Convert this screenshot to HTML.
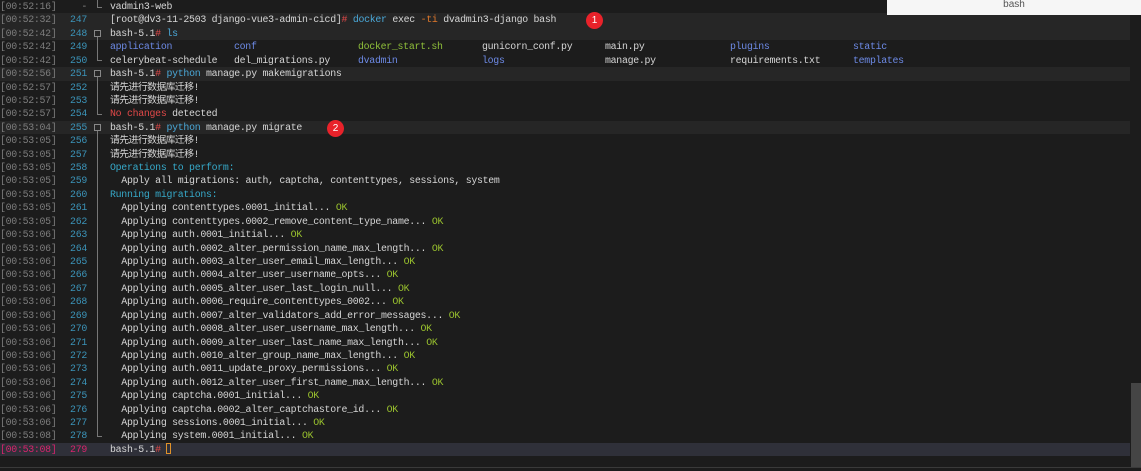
<!DOCTYPE html>
<html><head><meta charset="utf-8"><style>
*{margin:0;padding:0;box-sizing:border-box}
body{width:1141px;height:471px;background:#1c1c1c;overflow:hidden;position:relative;font-family:"Liberation Mono","Noto Sans CJK SC",monospace;font-size:9.9px;letter-spacing:-0.28px;color:#d6d6d6}
.r{position:absolute;left:0;width:1130px;height:13.42px;line-height:13.42px;white-space:pre}
.hl{background:#262626}
.cur{background:#2f3039}
.ts{position:absolute;left:0;color:#7d7d7d}
.ln{position:absolute;left:60px;width:27px;text-align:right;color:#3b93b8}
.tx{position:absolute;left:110px}
.c{color:#36a9c9}.b{color:#6d8ae6}.g{color:#8fbf3a}.ok{color:#9ac22e}.red{color:#e04848}.or{color:#e0782a}.py{color:#4aa8d8}
.pk{color:#d8246e}
.cj{letter-spacing:-0.6px}
.box{position:absolute;left:94px;width:7px;height:7px;border:1px solid #888}
.vl{position:absolute;left:97px;width:1px;background:#777}
.tk{position:absolute;left:97px;width:5px;height:1px;background:#777}
.badge{position:absolute;width:17px;height:17px;border-radius:50%;background:#e8222a;color:#fff;font-family:"Liberation Sans",sans-serif;font-size:10px;letter-spacing:0;text-align:center;line-height:17px}
</style></head><body>
<div class="r" style="top:0"><span class="ts">[00:52:16]</span><span class="ln" style="color:#888">-</span><span class="tx">vadmin3-web</span></div>
<div class="r hl" style="top:13.42px"><span class="ts">[00:52:32]</span><span class="ln">247</span><span class="tx">[root@dv3-11-2503 django-vue3-admin-cicd]<span class="red">#</span> <span class="py">docker</span> exec <span class="or">-ti</span> dvadmin3-django bash</span></div>
<div class="r hl" style="top:26.84px"><span class="ts">[00:52:42]</span><span class="ln">248</span><span class="tx">bash-5.1<span class="red">#</span> <span class="py">ls</span></span></div>
<div class="r" style="top:40.26px"><span class="ts">[00:52:42]</span><span class="ln">249</span><span class="tx b">application</span><span class="tx b" style="left:234px">conf</span><span class="tx g" style="left:358px">docker_start.sh</span><span class="tx" style="left:482px">gunicorn_conf.py</span><span class="tx" style="left:605px">main.py</span><span class="tx b" style="left:730px">plugins</span><span class="tx b" style="left:853px">static</span></div>
<div class="r" style="top:53.68px"><span class="ts">[00:52:42]</span><span class="ln">250</span><span class="tx">celerybeat-schedule</span><span class="tx" style="left:234px">del_migrations.py</span><span class="tx b" style="left:358px">dvadmin</span><span class="tx b" style="left:482px">logs</span><span class="tx" style="left:605px">manage.py</span><span class="tx" style="left:730px">requirements.txt</span><span class="tx b" style="left:853px">templates</span></div>
<div class="r hl" style="top:67.1px"><span class="ts">[00:52:56]</span><span class="ln">251</span><span class="tx">bash-5.1<span class="red">#</span> <span class="py">python</span> manage.py makemigrations</span></div>
<div class="r" style="top:80.52px"><span class="ts">[00:52:57]</span><span class="ln">252</span><span class="tx cj">请先进行数据库迁移!</span></div>
<div class="r" style="top:93.94px"><span class="ts">[00:52:57]</span><span class="ln">253</span><span class="tx cj">请先进行数据库迁移!</span></div>
<div class="r" style="top:107.36px"><span class="ts">[00:52:57]</span><span class="ln">254</span><span class="tx"><span class="red">No changes</span> detected</span></div>
<div class="r hl" style="top:120.78px"><span class="ts">[00:53:04]</span><span class="ln">255</span><span class="tx">bash-5.1<span class="red">#</span> <span class="py">python</span> manage.py migrate</span></div>
<div class="r" style="top:134.2px"><span class="ts">[00:53:05]</span><span class="ln">256</span><span class="tx cj">请先进行数据库迁移!</span></div>
<div class="r" style="top:147.62px"><span class="ts">[00:53:05]</span><span class="ln">257</span><span class="tx cj">请先进行数据库迁移!</span></div>
<div class="r" style="top:161.04px"><span class="ts">[00:53:05]</span><span class="ln">258</span><span class="tx c">Operations to perform:</span></div>
<div class="r" style="top:174.46px"><span class="ts">[00:53:05]</span><span class="ln">259</span><span class="tx">  Apply all migrations: auth, captcha, contenttypes, sessions, system</span></div>
<div class="r" style="top:187.88px"><span class="ts">[00:53:05]</span><span class="ln">260</span><span class="tx c">Running migrations:</span></div>
<div class="r" style="top:201.3px"><span class="ts">[00:53:05]</span><span class="ln">261</span><span class="tx">  Applying contenttypes.0001_initial... <span class="ok">OK</span></span></div>
<div class="r" style="top:214.72px"><span class="ts">[00:53:05]</span><span class="ln">262</span><span class="tx">  Applying contenttypes.0002_remove_content_type_name... <span class="ok">OK</span></span></div>
<div class="r" style="top:228.14px"><span class="ts">[00:53:06]</span><span class="ln">263</span><span class="tx">  Applying auth.0001_initial... <span class="ok">OK</span></span></div>
<div class="r" style="top:241.56px"><span class="ts">[00:53:06]</span><span class="ln">264</span><span class="tx">  Applying auth.0002_alter_permission_name_max_length... <span class="ok">OK</span></span></div>
<div class="r" style="top:254.98px"><span class="ts">[00:53:06]</span><span class="ln">265</span><span class="tx">  Applying auth.0003_alter_user_email_max_length... <span class="ok">OK</span></span></div>
<div class="r" style="top:268.4px"><span class="ts">[00:53:06]</span><span class="ln">266</span><span class="tx">  Applying auth.0004_alter_user_username_opts... <span class="ok">OK</span></span></div>
<div class="r" style="top:281.82px"><span class="ts">[00:53:06]</span><span class="ln">267</span><span class="tx">  Applying auth.0005_alter_user_last_login_null... <span class="ok">OK</span></span></div>
<div class="r" style="top:295.24px"><span class="ts">[00:53:06]</span><span class="ln">268</span><span class="tx">  Applying auth.0006_require_contenttypes_0002... <span class="ok">OK</span></span></div>
<div class="r" style="top:308.66px"><span class="ts">[00:53:06]</span><span class="ln">269</span><span class="tx">  Applying auth.0007_alter_validators_add_error_messages... <span class="ok">OK</span></span></div>
<div class="r" style="top:322.08px"><span class="ts">[00:53:06]</span><span class="ln">270</span><span class="tx">  Applying auth.0008_alter_user_username_max_length... <span class="ok">OK</span></span></div>
<div class="r" style="top:335.5px"><span class="ts">[00:53:06]</span><span class="ln">271</span><span class="tx">  Applying auth.0009_alter_user_last_name_max_length... <span class="ok">OK</span></span></div>
<div class="r" style="top:348.92px"><span class="ts">[00:53:06]</span><span class="ln">272</span><span class="tx">  Applying auth.0010_alter_group_name_max_length... <span class="ok">OK</span></span></div>
<div class="r" style="top:362.34px"><span class="ts">[00:53:06]</span><span class="ln">273</span><span class="tx">  Applying auth.0011_update_proxy_permissions... <span class="ok">OK</span></span></div>
<div class="r" style="top:375.76px"><span class="ts">[00:53:06]</span><span class="ln">274</span><span class="tx">  Applying auth.0012_alter_user_first_name_max_length... <span class="ok">OK</span></span></div>
<div class="r" style="top:389.18px"><span class="ts">[00:53:06]</span><span class="ln">275</span><span class="tx">  Applying captcha.0001_initial... <span class="ok">OK</span></span></div>
<div class="r" style="top:402.6px"><span class="ts">[00:53:06]</span><span class="ln">276</span><span class="tx">  Applying captcha.0002_alter_captchastore_id... <span class="ok">OK</span></span></div>
<div class="r" style="top:416.02px"><span class="ts">[00:53:06]</span><span class="ln">277</span><span class="tx">  Applying sessions.0001_initial... <span class="ok">OK</span></span></div>
<div class="r" style="top:429.44px"><span class="ts">[00:53:08]</span><span class="ln">278</span><span class="tx">  Applying system.0001_initial... <span class="ok">OK</span></span></div>
<div class="r cur" style="top:442.86px"><span class="ts pk">[00:53:08]</span><span class="ln pk">279</span><span class="tx">bash-5.1<span class="red">#</span> <span style="display:inline-block;width:5px;height:11px;border:1px solid #e0922a;vertical-align:-2px"></span></span></div>

<div class="vl" style="top:0;height:7px"></div><div class="tk" style="top:7px"></div>
<div class="box" style="top:30px"></div><div class="vl" style="top:37px;height:24px"></div><div class="tk" style="top:60px"></div>
<div class="box" style="top:70px"></div><div class="vl" style="top:77px;height:37px"></div><div class="tk" style="top:114px"></div>
<div class="box" style="top:124px"></div><div class="vl" style="top:131px;height:305px"></div><div class="tk" style="top:436px"></div>

<div class="badge" style="left:586px;top:12px">1</div>
<div class="badge" style="left:327px;top:120px">2</div>

<div style="position:absolute;left:887px;top:0;width:254px;height:15px;background:#f6f6f6;color:#555;font-family:'Liberation Sans',sans-serif;font-size:10px;letter-spacing:0;text-align:center;line-height:9px">bash</div>
<div style="position:absolute;left:1131px;top:383px;width:10px;height:85px;background:#454545"></div>
<div style="position:absolute;left:0;top:467px;width:1141px;height:1px;background:#3a3a3a"></div>
</body></html>
